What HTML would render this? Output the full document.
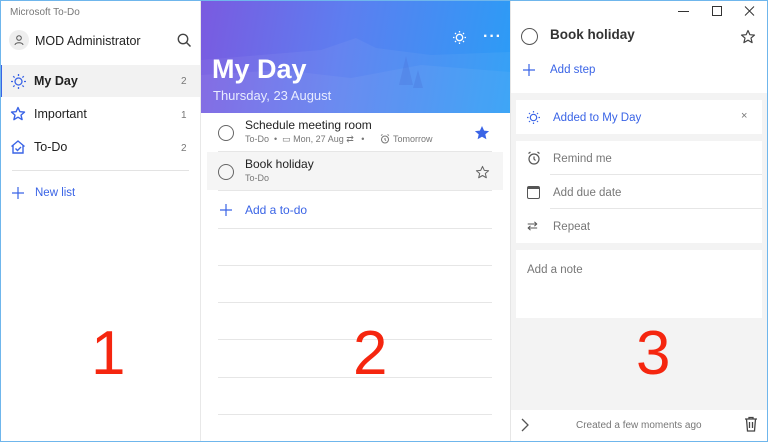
<!DOCTYPE html>
<html><head><meta charset="utf-8"><style>
*{margin:0;padding:0;box-sizing:border-box}
body{width:768px;height:442px;overflow:hidden;font-family:"Liberation Sans",sans-serif;background:#fff;position:relative;font-size:12px;color:#222}
.abs{position:absolute}
.b{border:1px solid #6fb6ec;position:absolute;left:0;top:0;width:768px;height:442px;pointer-events:none}
.blue{color:#3a64e6}
.grey{color:#777}
.big{font-size:62px;color:#f5260f;font-family:"Liberation Sans",sans-serif}
.line{position:absolute;left:218px;width:274px;height:1px;background:#e6e6e6}
</style></head><body>
<!-- left -->
<div class="abs" style="left:0;top:0;width:201px;height:442px;background:#fff;border-right:1px solid #e8e8e8"></div>
<div class="abs grey" style="left:10px;top:7px;font-size:10px">Microsoft To-Do</div>
<div class="abs" style="left:9px;top:30px;width:20px;height:20px;border-radius:50%;background:#eee"></div>
<svg class="abs" style="left:13px;top:34px" width="12" height="12" viewBox="0 0 12 12"><circle cx="6" cy="4" r="2.3" fill="none" stroke="#555"/><path d="M2 11c0-3 8-3 8 0" fill="none" stroke="#555"/></svg>
<div class="abs" style="left:35px;top:34px;font-size:12.5px">MOD Administrator</div>
<svg class="abs" style="left:177px;top:33px" width="15" height="15" viewBox="0 0 15 15"><circle cx="6" cy="6" r="4.7" fill="none" stroke="#444" stroke-width="1.4"/><path d="M9.5 9.5l4 4" stroke="#444" stroke-width="1.5"/></svg>
<div class="abs" style="left:0;top:65px;width:200px;height:32px;background:#f2f2f2;border-left:2px solid #3a64e6"></div>
<svg class="abs" style="left:10px;top:73px" width="17" height="17" viewBox="0 0 17 17" fill="none" stroke="#3a64e6" stroke-width="1.3"><circle cx="8.5" cy="8.5" r="3.5"/><path d="M8.5 1v2M8.5 14v2M1 8.5h2M14 8.5h2M3.2 3.2l1.4 1.4M12.4 12.4l1.4 1.4M3.2 13.8l1.4-1.4M12.4 4.6l1.4-1.4"/></svg>
<div class="abs" style="left:34px;top:74px;font-size:12.5px;font-weight:bold">My Day</div>
<div class="abs grey" style="left:181px;top:76px;font-size:10px">2</div>
<svg class="abs" style="left:10px;top:106px" width="16" height="16" viewBox="0 0 16 16"><path d="M8 1.5l1.9 4.2 4.6.4-3.5 3 1.1 4.5L8 11.2l-4.1 2.4 1.1-4.5-3.5-3 4.6-.4z" fill="none" stroke="#3a64e6" stroke-width="1.4" stroke-linejoin="round"/></svg>
<div class="abs" style="left:34px;top:107px;font-size:12.5px">Important</div>
<div class="abs grey" style="left:181px;top:110px;font-size:10px">1</div>
<svg class="abs" style="left:10px;top:139px" width="16" height="16" viewBox="0 0 16 16" fill="none" stroke="#3a64e6" stroke-width="1.4"><path d="M1.5 7.5L8 2l6.5 5.5M3 6.5V14h10V6.5"/><path d="M5.5 9.5l2 2 3.5-3.5"/></svg>
<div class="abs" style="left:34px;top:140px;font-size:12.5px">To-Do</div>
<div class="abs grey" style="left:181px;top:143px;font-size:10px">2</div>
<div class="abs" style="left:12px;top:170px;width:177px;height:1px;background:#e3e3e3"></div>
<svg class="abs" style="left:12px;top:187px" width="12" height="12" viewBox="0 0 12 12" stroke="#3a64e6" stroke-width="1.2"><path d="M6 0v12M0 6h12"/></svg>
<div class="abs blue" style="left:35px;top:187px;font-size:11.5px">New list</div>
<div class="abs big" style="left:91px;top:318px">1</div>

<!-- middle -->
<div class="abs" style="left:201px;top:0;width:309px;height:113px;background:linear-gradient(100deg,#7a5ae0 0%,#5d7ef0 45%,#2a9df6 100%);overflow:hidden">
<svg width="309" height="113" style="position:absolute;left:0;top:0"><path d="M0 60 L60 55 L120 50 L155 38 L175 48 L230 55 L309 52 V113 H0Z" fill="#fff" opacity=".05"/><path d="M0 75 L80 70 L150 78 L220 65 L309 72 V113 H0Z" fill="#fff" opacity=".05"/><path d="M205 56 L212 85 L198 85Z M217 70 L222 88 L212 88Z" fill="#4a6fd8" opacity=".3"/></svg>
</div>
<svg class="abs" style="left:452px;top:30px" width="15" height="15" viewBox="0 0 15 15" fill="none" stroke="#fff" stroke-width="1.3"><circle cx="7.5" cy="7.5" r="3.2"/><path d="M7.5 1v1.5M7.5 12.5V14M1 7.5h1.5M12.5 7.5H14M3 3l1 1M11 11l1 1M3 12l1-1M11 4l1-1"/></svg>
<div class="abs" style="left:483px;top:28px;color:#fff;font-size:16px;font-weight:bold;letter-spacing:1px">···</div>
<div class="abs" style="left:212px;top:54px;color:#fff;font-size:27px;font-weight:bold">My Day</div>
<div class="abs" style="left:213px;top:88px;color:#e8ecff;font-size:13px">Thursday, 23 August</div>
<div class="abs" style="left:218px;top:125px;width:16px;height:16px;border:1.5px solid #666;border-radius:50%"></div>
<div class="abs" style="left:245px;top:118px;font-size:12px">Schedule meeting room</div>
<div class="abs grey" style="left:245px;top:134px;font-size:9px;white-space:pre">To-Do  •  ▭ Mon, 27 Aug ⇄   •</div>
<svg class="abs" style="left:380px;top:134px" width="10" height="10" viewBox="0 0 10 10" fill="none" stroke="#777" stroke-width="1"><circle cx="5" cy="5.5" r="3.5"/><path d="M5 4v1.7l1 1M1 1.5l1.5-1M9 1.5l-1.5-1"/></svg>
<div class="abs grey" style="left:393px;top:134px;font-size:9px">Tomorrow</div>
<svg class="abs" style="left:474px;top:125px" width="16" height="16" viewBox="0 0 16 16"><path d="M8 1l2.1 4.6 5 .5-3.8 3.3 1.1 4.9L8 11.8l-4.4 2.5 1.1-4.9L.9 6.1l5-.5z" fill="#3a64e6"/></svg>
<div class="line" style="top:151px"></div>
<div class="abs" style="left:207px;top:152px;width:296px;height:38px;background:#f5f5f5"></div>
<div class="abs" style="left:218px;top:164px;width:16px;height:16px;border:1.5px solid #666;border-radius:50%"></div>
<div class="abs" style="left:245px;top:157px;font-size:12px">Book holiday</div>
<div class="abs grey" style="left:245px;top:173px;font-size:9px">To-Do</div>
<svg class="abs" style="left:475px;top:165px" width="15" height="15" viewBox="0 0 16 16"><path d="M8 1.5l1.9 4.2 4.6.4-3.5 3 1.1 4.5L8 11.2l-4.1 2.4 1.1-4.5-3.5-3 4.6-.4z" fill="none" stroke="#666" stroke-width="1.1" stroke-linejoin="round"/></svg>
<div class="line" style="top:190px"></div>
<svg class="abs" style="left:220px;top:204px" width="12" height="12" viewBox="0 0 12 12" stroke="#3a64e6" stroke-width="1.2"><path d="M6 0v12M0 6h12"/></svg>
<div class="abs blue" style="left:245px;top:203px;font-size:12px">Add a to-do</div>
<div class="line" style="top:228px"></div><div class="line" style="top:265px"></div><div class="line" style="top:302px"></div><div class="line" style="top:339px"></div><div class="line" style="top:377px"></div><div class="line" style="top:414px"></div>
<div class="abs" style="left:510px;top:0;width:1px;height:442px;background:#e6e6e6"></div>
<div class="abs big" style="left:353px;top:318px">2</div>

<!-- right -->
<div class="abs" style="left:511px;top:93px;width:257px;height:317px;background:#f3f3f3"></div>
<svg class="abs" style="left:675px;top:4px" width="85" height="14" viewBox="0 0 85 14" fill="none" stroke="#333" stroke-width="1"><path d="M3 7.5h11"/><rect x="37.5" y="2.5" width="9" height="9"/><path d="M70 2.5l9 9M79 2.5l-9 9"/></svg>
<div class="abs" style="left:521px;top:28px;width:17px;height:17px;border:1.5px solid #555;border-radius:50%"></div>
<div class="abs" style="left:550px;top:27px;font-size:13.5px;font-weight:bold;color:#333">Book holiday</div>
<svg class="abs" style="left:740px;top:29px" width="16" height="16" viewBox="0 0 16 16"><path d="M8 1.5l1.9 4.2 4.6.4-3.5 3 1.1 4.5L8 11.2l-4.1 2.4 1.1-4.5-3.5-3 4.6-.4z" fill="none" stroke="#444" stroke-width="1.2" stroke-linejoin="round"/></svg>
<svg class="abs" style="left:523px;top:64px" width="12" height="12" viewBox="0 0 12 12" stroke="#3a64e6" stroke-width="1.2"><path d="M6 0v12M0 6h12"/></svg>
<div class="abs blue" style="left:550px;top:64px;font-size:11.5px">Add step</div>
<div class="abs" style="left:516px;top:100px;width:246px;height:34px;background:#fff"></div>
<svg class="abs" style="left:526px;top:110px" width="15" height="15" viewBox="0 0 15 15" fill="none" stroke="#3a64e6" stroke-width="1.2"><circle cx="7.5" cy="7.5" r="3.2"/><path d="M7.5 1v1.5M7.5 12.5V14M1 7.5h1.5M12.5 7.5H14M3 3l1 1M11 11l1 1M3 12l1-1M11 4l1-1"/></svg>
<div class="abs blue" style="left:553px;top:112px;font-size:11.5px">Added to My Day</div>
<div class="abs grey" style="left:741px;top:110px;font-size:11px">×</div>
<div class="abs" style="left:516px;top:141px;width:246px;height:102px;background:#fff"></div>
<div class="abs" style="left:550px;top:174px;width:212px;height:1px;background:#e6e6e6"></div>
<div class="abs" style="left:550px;top:208px;width:212px;height:1px;background:#e6e6e6"></div>
<svg class="abs" style="left:527px;top:151px" width="14" height="14" viewBox="0 0 14 14" fill="none" stroke="#555" stroke-width="1.2"><circle cx="7" cy="8" r="5"/><path d="M7 5.5V8l1.5 1.5M1.5 2.5l2-1.5M12.5 2.5l-2-1.5"/></svg>
<div class="abs grey" style="left:553px;top:153px;font-size:11.5px">Remind me</div>
<div class="abs" style="left:527px;top:186px;width:13px;height:13px;border:1.3px solid #555;border-radius:2px;border-top-width:3px"></div>
<div class="abs grey" style="left:553px;top:187px;font-size:11.5px">Add due date</div>
<div class="abs" style="left:527px;top:218px;font-size:13px;color:#555">⇄</div>
<div class="abs grey" style="left:553px;top:221px;font-size:11.5px">Repeat</div>
<div class="abs" style="left:516px;top:250px;width:246px;height:68px;background:#fff"></div>
<div class="abs grey" style="left:527px;top:264px;font-size:11.5px">Add a note</div>
<div class="abs big" style="left:636px;top:318px">3</div>
<div class="abs" style="left:511px;top:410px;width:257px;height:32px;background:#fff"></div>
<svg class="abs" style="left:520px;top:418px" width="10" height="14" viewBox="0 0 10 14"><path d="M2 1l6 6-6 6" fill="none" stroke="#555" stroke-width="1.3"/></svg>
<div class="abs grey" style="left:576px;top:420px;font-size:10px">Created a few moments ago</div>
<svg class="abs" style="left:744px;top:416px" width="14" height="16" viewBox="0 0 14 16" fill="none" stroke="#444" stroke-width="1.3"><path d="M1 3h12M5 3V1.5h4V3M2.5 3l1 12h7l1-12M5.5 6v6M8.5 6v6"/></svg>
<div class="b"></div>
</body></html>
